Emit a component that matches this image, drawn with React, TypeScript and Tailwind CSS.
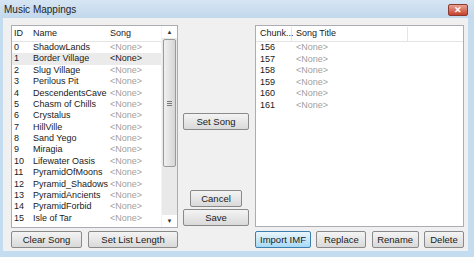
import React from "react";

const areas = [
  "ShadowLands",
  "Border Village",
  "Slug Village",
  "Perilous Pit",
  "DescendentsCave",
  "Chasm of Chills",
  "Crystalus",
  "HillVille",
  "Sand Yego",
  "Miragia",
  "Lifewater Oasis",
  "PyramidOfMoons",
  "Pyramid_Shadows",
  "PyramidAncients",
  "PyramidForbid",
  "Isle of Tar",
];

const chunks = [156, 157, 158, 159, 160, 161];

const Btn = ({
  label,
  className,
  hot,
}: {
  label: string;
  className?: string;
  hot?: boolean;
}) => (
  <button
    className={
      "h-[17px] rounded-[2px] border text-[9.5px] leading-none text-[#1a1a1a] " +
      (hot
        ? "border-[#3c7fb1] bg-gradient-to-b from-[#eaf6fd] to-[#a7d9f5] "
        : "border-[#8a8a8a] bg-gradient-to-b from-[#f4f4f4] to-[#d9d9d9] ") +
      (className || "")
    }
  >
    {label}
  </button>
);

export default function App() {
  return (
    <div
      className="w-[474px] h-[257px] flex flex-col bg-[#c3dcef] overflow-hidden"
      style={{ fontFamily: '"Liberation Sans", Arial, sans-serif' }}
    >
      {/* title bar */}
      <div className="h-[18px] flex items-center justify-between pl-[4px] pr-[6px] bg-gradient-to-b from-[#d6e5f3] to-[#c2d8ec]">
        <span className="text-[10px] text-[#1e1e1e]">Music Mappings</span>
        <div className="w-[20px] h-[12px] mt-[2px] rounded-[2px] border border-[#8d3a2e] bg-gradient-to-b from-[#e8a093] to-[#c4412c] flex items-center justify-center text-white text-[9px] font-bold leading-none">
          ✕
        </div>
      </div>

      {/* client */}
      <div className="flex-1 ml-[3px] mr-[6px] mb-[6px] bg-[#f0f0f0] flex pt-[7px] pb-[3px] pl-[8px] pr-[4px] gap-[5px] text-[9px] text-[#1a1a1a]">
        {/* left column */}
        <div className="w-[167px] flex flex-col">
          <div className="h-[203px] border border-[#abadb3] bg-white flex">
            <div className="flex-1 flex flex-col">
              <div className="h-[15px] flex items-center border-b border-[#e5e5e5] shrink-0 mt-[1px]">
                <span className="w-[21px] pl-[2px]">ID</span>
                <span className="w-[77px]">Name</span>
                <span>Song</span>
              </div>
              <div className="flex flex-col">
                {areas.map((a, i) => (
                  <div
                    key={a}
                    className={
                      "h-[11.4px] flex items-center " +
                      (i === 1 ? "bg-[#ebebeb]" : "")
                    }
                  >
                    <span className="w-[21px] pl-[2px]">{i}</span>
                    <span className="w-[77px] whitespace-nowrap">{a}</span>
                    <span
                      className={i === 1 ? "text-[#1a1a1a]" : "text-[#a0a0a0]"}
                    >
                      &lt;None&gt;
                    </span>
                  </div>
                ))}
              </div>
            </div>
            {/* scrollbar */}
            <div className="w-[16px] flex flex-col bg-[#e9e9e9] border-l border-[#f3f3f3]">
              <div className="h-[12px] flex items-center justify-center text-[6px] text-[#333] bg-white">
                ▲
              </div>
              <div className="h-[128px] mx-[1px] mt-[1px] rounded-[2px] border border-[#9a9a9a] bg-gradient-to-r from-[#f0f0f0] to-[#d6d6d6] flex items-center justify-center">
                <div className="w-[5px] flex flex-col gap-[1px]">
                  <div className="h-px bg-[#7a7a7a]" />
                  <div className="h-px bg-[#7a7a7a]" />
                  <div className="h-px bg-[#7a7a7a]" />
                </div>
              </div>
              <div className="flex-1" />
              <div className="h-[12px] flex items-center justify-center text-[6px] text-[#333] bg-white">
                ▼
              </div>
            </div>
          </div>
          <div className="flex gap-[6px] mt-[3px]">
            <Btn label="Clear Song" className="w-[71px]" />
            <Btn label="Set List Length" className="w-[90px]" />
          </div>
        </div>

        {/* middle */}
        <div className="w-[66px] flex flex-col items-center pt-[88px]">
          <Btn label="Set Song" className="w-[66px]" />
          <div className="h-[60px]" />
          <Btn label="Cancel" className="w-[52px]" />
          <div className="h-[2px]" />
          <Btn label="Save" className="w-[66px]" />
        </div>

        {/* right column */}
        <div className="flex-1 flex flex-col ml-[1px]">
          <div className="h-[202px] border border-[#abadb3] bg-white flex flex-col">
            <div className="h-[15px] flex items-center border-b border-[#e5e5e5] shrink-0 mt-[1px]">
              <span className="w-[36px] pl-[4px] border-r border-[#e5e5e5] whitespace-nowrap">Chunk...</span>
              <span className="w-[116px] pl-[4px] border-r border-[#e5e5e5]">Song Title</span>
            </div>
            <div className="flex flex-col">
              {chunks.map((c) => (
                <div key={c} className="h-[11.6px] flex items-center">
                  <span className="w-[36px] pl-[4px]">{c}</span>
                  <span className="pl-[4px] text-[#a0a0a0]">&lt;None&gt;</span>
                </div>
              ))}
            </div>
          </div>
          <div className="flex justify-between mt-[4px]">
            <Btn label="Import IMF" className="w-[56px]" hot />
            <Btn label="Replace" className="w-[50px]" />
            <Btn label="Rename" className="w-[47px]" />
            <Btn label="Delete" className="w-[40px]" />
          </div>
        </div>
      </div>
    </div>
  );
}
